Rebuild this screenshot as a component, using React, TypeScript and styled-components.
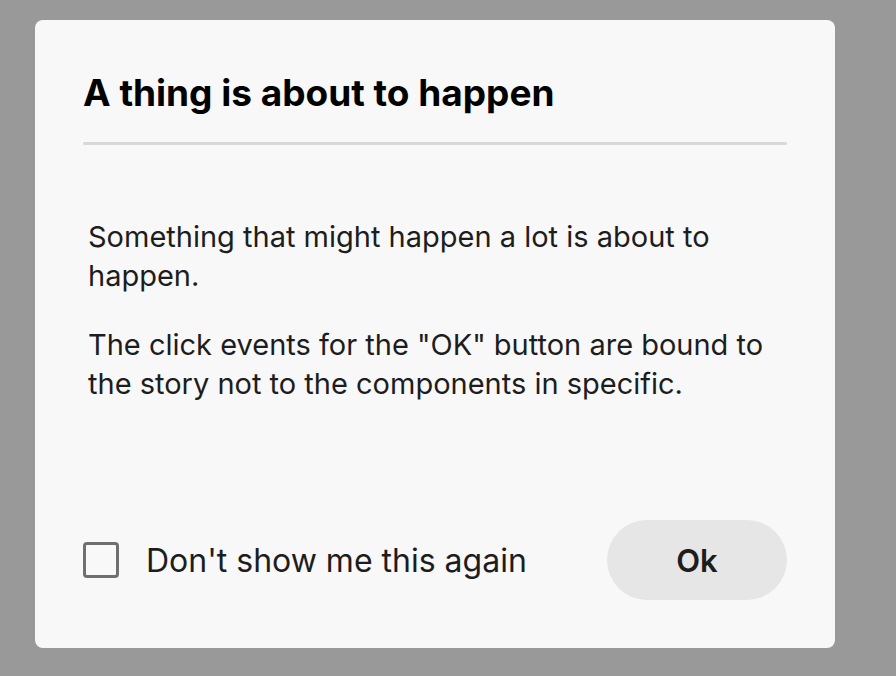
import React, { FunctionComponent } from "react";
import styled, { createGlobalStyle } from "styled-components";

const GlobalStyle = createGlobalStyle`
  html, body {
    margin: 0;
    padding: 0;
    background: #999999;
    font-family: Inter, "Noto Sans", "Liberation Sans", sans-serif;
  }
`

const Backdrop = styled.div`
  width: 896px;
  height: 676px;
  padding: 20px 61px 28px 35px;
  box-sizing: border-box;
  display: flex;
`

const Dialog = styled.div`
  flex: 1;
  background: #f8f8f8;
  border-radius: 8px;
  padding: 48px;
  display: flex;
  flex-direction: column;
`

const Title = styled.h1`
  margin: 0;
  font-size: 37px;
  font-weight: 700;
  color: #000;
  line-height: 50px;
  height: 56px;
  letter-spacing: 0;
`

const Divider = styled.hr`
  margin: 18px 0 0;
  border: none;
  height: 3px;
  border-radius: 2px;
  background: #d8d8d8;
`

const Body = styled.div`
  flex: 1;
  padding: 72px 0 0 5px;
`

const Paragraph = styled.p`
  margin: 0 0 30px;
  font-size: 29px;
  line-height: 39px;
  color: #1d1d1d;
`

const Footer = styled.div`
  display: flex;
  align-items: center;
  justify-content: space-between;
`

const CheckRow = styled.label`
  display: flex;
  align-items: center;
  gap: 27px;
  font-size: 32px;
  color: #1d1d1d;
`

const Box = styled.span`
  width: 36px;
  height: 36px;
  box-sizing: border-box;
  border: 3px solid #6f6f6f;
  border-radius: 4px;
`

const OkButton = styled.button`
  width: 180px;
  height: 80px;
  border: none;
  border-radius: 40px;
  background: #e6e6e6;
  font-family: inherit;
  font-size: 31px;
  font-weight: 600;
  color: #1d1d1d;
`

interface IAppProps {
  onClick?: () => any;
}

const App: FunctionComponent<IAppProps> = ({ onClick }) => {
  return (
    <>
      <GlobalStyle />
      <Backdrop>
        <Dialog>
          <Title>A thing is about to happen</Title>
          <Divider />
          <Body>
            <Paragraph>Something that might happen a lot is about to happen.</Paragraph>
            <Paragraph>The click events for the "OK" button are bound to the story not to the components in specific.</Paragraph>
          </Body>
          <Footer>
            <CheckRow>
              <Box />
              Don't show me this again
            </CheckRow>
            <OkButton onClick={onClick}>Ok</OkButton>
          </Footer>
        </Dialog>
      </Backdrop>
    </>
  )
}

export default App
